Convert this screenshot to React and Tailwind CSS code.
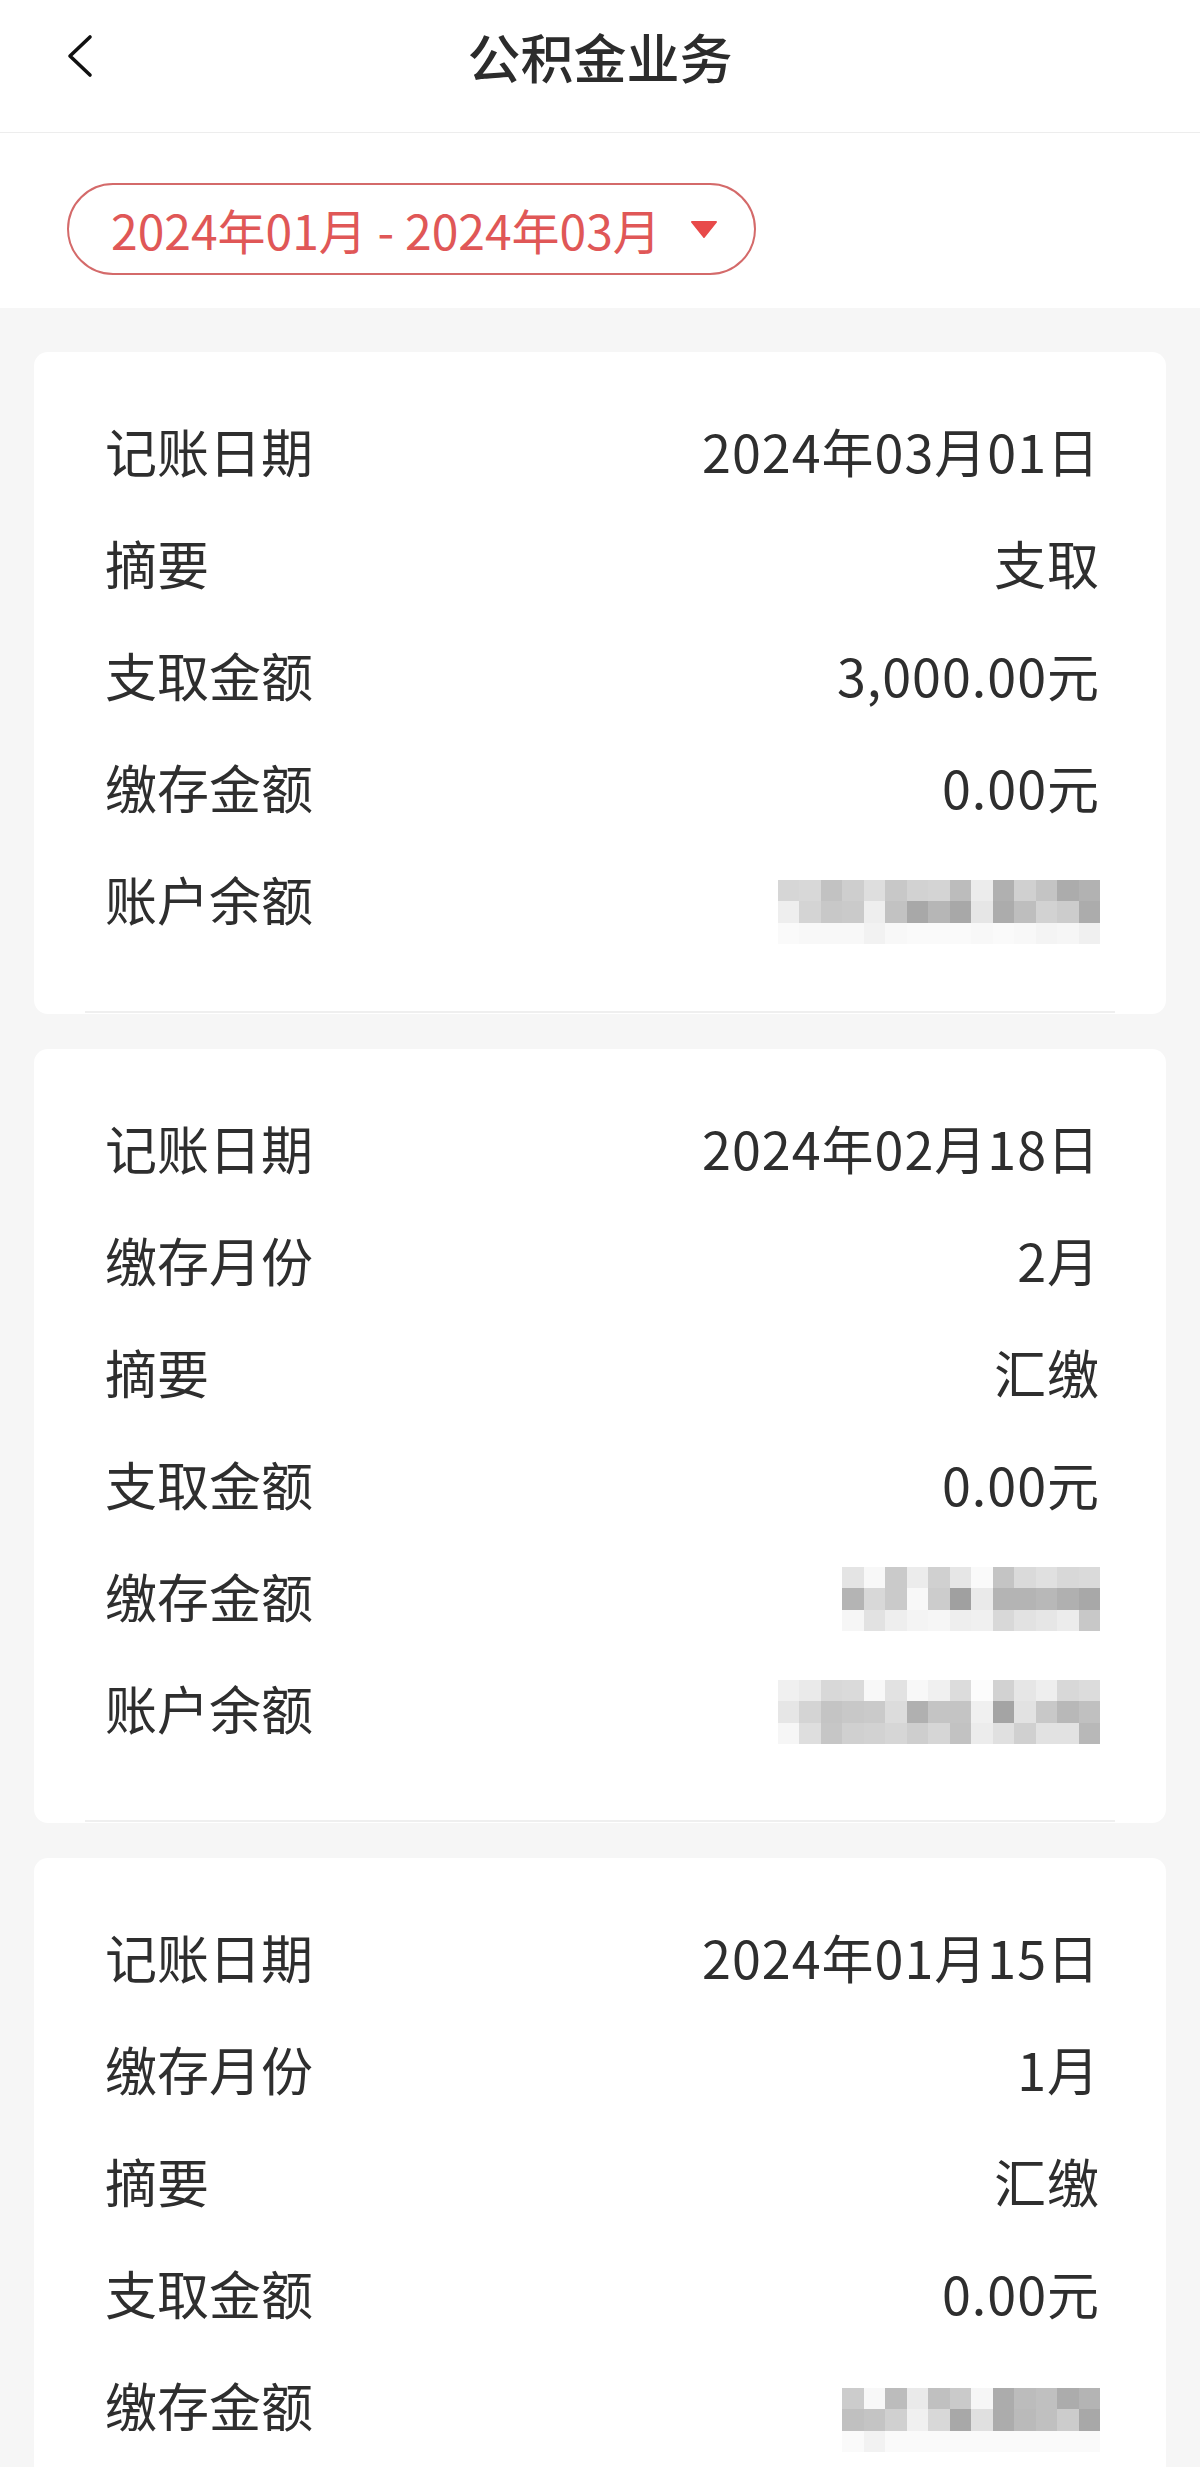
const mosaics = {
  balance1: [
    ["#d6d6d6", "#d8d8d8", "#c2c2c2", "#cecece", "#dedede", "#c8c8c8", "#d2d2d2", "#d4d4d4", "#bcbcbc", "#ececec", "#b0b0b0", "#d0d0d0", "#c4c4c4", "#acacac", "#b2b2b2"],
    ["#eeeeee", "#d4d4d4", "#c8c8c8", "#cacaca", "#eeeeee", "#c2c2c2", "#a8a8a8", "#b6b6b6", "#a8a8a8", "#e6e6e6", "#acacac", "#bebebe", "#d2d2d2", "#cccccc", "#acacac"],
    ["#fafafa", "#f8f8f8", "#f8f8f8", "#f8f8f8", "#f2f2f2", "#f8f8f8", "#fafafa", "#fafafa", "#fafafa", "#f8f8f8", "#fafafa", "#f8f8f8", "#f4f4f4", "#f6f6f6", "#f0f0f0"],
  ],
  deposit2: [
    ["#e4e4e4", "#f8f8f8", "#cacaca", "#ececec", "#d0d0d0", "#e6e6e6", "#fafafa", "#c4c4c4", "#dadada", "#e0e0e0", "#d8d8d8", "#dadada"],
    ["#b4b4b4", "#d8d8d8", "#cacaca", "#f8f8f8", "#cccccc", "#a0a0a0", "#eaeaea", "#b4b4b4", "#b4b4b4", "#b8b8b8", "#b0b0b0", "#a8a8a8"],
    ["#f6f6f6", "#e2e2e2", "#eeeeee", "#f4f4f4", "#f6f6f6", "#eeeeee", "#f0f0f0", "#d8d8d8", "#e2e2e2", "#e6e6e6", "#ececec", "#c8c8c8"],
  ],
  balance2: [
    ["#f0f0f0", "#eaeaea", "#d8d8d8", "#dadada", "#f8f8f8", "#e2e2e2", "#f8f8f8", "#f0f0f0", "#dcdcdc", "#fcfcfc", "#d2d2d2", "#e6e6e6", "#eeeeee", "#d8d8d8", "#dcdcdc"],
    ["#e6e6e6", "#d4d4d4", "#c4c4c4", "#c8c8c8", "#cacaca", "#dcdcdc", "#b0b0b0", "#c4c4c4", "#c4c4c4", "#f0f0f0", "#a4a4a4", "#e2e2e2", "#c8c8c8", "#b8b8b8", "#c0c0c0"],
    ["#f6f6f6", "#dedede", "#c6c6c6", "#d0d0d0", "#d2d2d2", "#d6d6d6", "#cecece", "#d6d6d6", "#c2c2c2", "#ececec", "#e0e0e0", "#d0d0d0", "#e2e2e2", "#e2e2e2", "#b8b8b8"],
  ],
  deposit3: [
    ["#cccccc", "#f8f8f8", "#bcbcbc", "#eaeaea", "#c0c0c0", "#cacaca", "#f6f6f6", "#acacac", "#bcbcbc", "#c0c0c0", "#acacac", "#b4b4b4"],
    ["#c0c0c0", "#c4c4c4", "#d0d0d0", "#f0f0f0", "#d8d8d8", "#a8a8a8", "#e0e0e0", "#acacac", "#bababa", "#c0c0c0", "#cccccc", "#a8a8a8"],
    ["#fafafa", "#f2f2f2", "#fafafa", "#fafafa", "#fafafa", "#fafafa", "#fafafa", "#fafafa", "#fafafa", "#fafafa", "#fafafa", "#fafafa"],
  ],
};

const records = [
  {
    rows: [
      { label: "记账日期", value: "2024年03月01日" },
      { label: "摘要", value: "支取" },
      { label: "支取金额", value: "3,000.00元" },
      { label: "缴存金额", value: "0.00元" },
      { label: "账户余额", mosaic: "balance1", shift: "mt-[26px]" },
    ],
  },
  {
    rows: [
      { label: "记账日期", value: "2024年02月18日" },
      { label: "缴存月份", value: "2月" },
      { label: "摘要", value: "汇缴" },
      { label: "支取金额", value: "0.00元" },
      { label: "缴存金额", mosaic: "deposit2", shift: "mt-[6px]" },
      { label: "账户余额", mosaic: "balance2", shift: "mt-[8px]" },
    ],
  },
  {
    rows: [
      { label: "记账日期", value: "2024年01月15日" },
      { label: "缴存月份", value: "1月" },
      { label: "摘要", value: "汇缴" },
      { label: "支取金额", value: "0.00元" },
      { label: "缴存金额", mosaic: "deposit3", shift: "mt-[30px]" },
    ],
  },
];

function Mosaic({ name, shift }) {
  const grid = mosaics[name];
  return (
    <div className={"flex flex-col " + shift}>
      {grid.map((line, i) => (
        <div key={i} className="flex">
          {line.map((c, j) => (
            <div key={j} className="w-[21.5px] h-[21.5px]" style={{ backgroundColor: c }} />
          ))}
        </div>
      ))}
    </div>
  );
}

function RecordCard({ rows }) {
  return (
    <div className="bg-white rounded-[14px] pt-[43px] pb-[59px] relative">
      {rows.map((row, i) => (
        <div key={i} className="h-[112px] flex items-center justify-between pl-[71px] pr-[66px]">
          <span className="text-[52px] leading-none text-[#2e2e2e]">{row.label}</span>
          {row.mosaic ? (
            <Mosaic name={row.mosaic} shift={row.shift} />
          ) : (
            <span className="text-[52px] leading-none tracking-[1px] text-[#2e2e2e]">{row.value}</span>
          )}
        </div>
      ))}
      <div className="absolute bottom-[1px] left-[51px] right-[51px] h-[2px] bg-[#efefef]" />
    </div>
  );
}

export default function App() {
  return (
    <div
      className="h-[2467px] overflow-hidden bg-[#f6f6f6]"
      style={{ fontFamily: '"Noto Sans CJK SC", "Noto Sans", sans-serif' }}
    >
      <header className="h-[133px] pb-[20px] bg-white border-b border-[#ededed] grid grid-cols-[1fr_auto_1fr] items-center">
        <div className="pl-[67px] flex items-center">
          <svg width="28" height="44" viewBox="0 0 28 44" fill="none">
            <polyline
              points="23,3 3,22 23,41"
              stroke="#111"
              strokeWidth="3.6"
              strokeLinecap="round"
              strokeLinejoin="round"
            />
          </svg>
        </div>
        <h1 className="text-[53px] font-medium text-[#2c2c2c] leading-none">公积金业务</h1>
        <div />
      </header>

      <section className="bg-white pt-[50px] pb-[33px] pl-[67px]">
        <button className="h-[92px] inline-flex items-center rounded-full border-[2.5px] border-[#d46a6a] pl-[42px] pr-[36px]">
          <span className="text-[48px] leading-none text-[#e05757]">2024年01月 - 2024年03月</span>
          <svg className="ml-[29px]" width="28" height="18" viewBox="0 0 28 18">
            <path d="M2 2 L26 2 L14 17 Z" fill="#e84a4a" stroke="#e84a4a" strokeWidth="2" strokeLinejoin="round" />
          </svg>
        </button>
      </section>

      <main className="pt-[44px] px-[34px] flex flex-col gap-[35px]">
        {records.map((r, i) => (
          <RecordCard key={i} rows={r.rows} />
        ))}
      </main>
    </div>
  );
}
